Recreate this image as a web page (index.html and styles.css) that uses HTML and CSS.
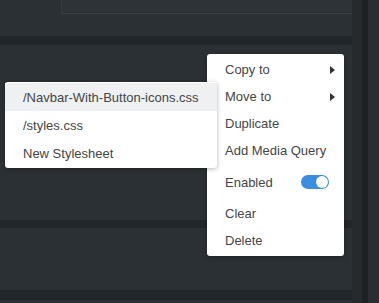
FILE: index.html
```html
<!DOCTYPE html>
<html>
<head>
<meta charset="utf-8">
<link rel="stylesheet" href="styles.css">
</head>
<body>
<div class="app">
  <div class="main">
    <div class="top"><div class="topbox"></div></div>
    <div class="band b1"></div>
    <div class="panel p1"></div>
    <div class="band b2"></div>
    <div class="panel p2"></div>
    <div class="band b3"></div>
    <div class="panel p3"></div>
  </div>
  <div class="strip s1"></div>
  <div class="strip s2"></div>
  <div class="strip s3"></div>
</div>

<div class="menu">
  <div class="item">Copy to<span class="arrow"></span></div>
  <div class="item">Move to<span class="arrow"></span></div>
  <div class="item">Duplicate</div>
  <div class="item">Add Media Query</div>
  <div class="item toggle-row">Enabled<span class="toggle"><span class="knob"></span></span></div>
  <div class="item">Clear</div>
  <div class="item">Delete</div>
</div>

<div class="submenu">
  <div class="sitem active">/Navbar-With-Button-icons.css</div>
  <div class="sitem">/styles.css</div>
  <div class="sitem">New Stylesheet</div>
</div>
</body>
</html>
```

FILE: styles.css
```css
html, body {
  margin: 0;
  padding: 0;
  width: 379px;
  height: 303px;
  overflow: hidden;
  background: #2b3034;
  font-family: "Liberation Sans", Arial, sans-serif;
}

.app {
  display: grid;
  grid-template-columns: 352px 10px 6px 1fr;
  height: 303px;
}

.main {
  display: flex;
  flex-direction: column;
  background: #2b3034;
}

.top {
  height: 36px;
  flex: none;
}

.topbox {
  margin-left: 61px;
  height: 13px;
  background: #2e3337;
  border-bottom: 1px solid #3a4045;
  border-left: 1px solid #353b40;
}

.band {
  flex: none;
  background: #232629;
}
.b1 { height: 9px; }
.b2 { height: 8px; }
.b3 { height: 10px; }

.panel {
  flex: none;
  background: #2b3034;
}
.p1 { height: 175px; }
.p2 { height: 62px; }
.p3 { flex: 1; }

.s1 { background: #262a2d; }
.s2 { background: #1e2124; }
.s3 { background: #2a2e32; }

.menu {
  position: absolute;
  left: 207px;
  top: 54px;
  width: 137px;
  padding: 2px 0;
  background: #fff;
  border-radius: 3px;
  box-shadow: 0 1px 4px rgba(0, 0, 0, 0.3);
  z-index: 1;
}

.item {
  height: 27px;
  display: flex;
  align-items: center;
  padding-left: 18px;
  padding-right: 10px;
  font-size: 13px;
  color: #454545;
  position: relative;
}

.toggle-row {
  height: 36px;
}

.arrow {
  position: absolute;
  left: 123px;
  top: 10px;
  width: 0;
  height: 0;
  border-top: 4px solid transparent;
  border-bottom: 4px solid transparent;
  border-left: 5px solid #333;
}

.toggle {
  position: absolute;
  left: 94px;
  top: 11px;
  width: 28px;
  height: 14px;
  border-radius: 7px;
  background: #3a8ee2;
}

.knob {
  position: absolute;
  right: 1px;
  top: 1px;
  width: 12px;
  height: 12px;
  border-radius: 50%;
  background: #fff;
}

.submenu {
  position: absolute;
  left: 5px;
  top: 82px;
  width: 212px;
  padding: 1px 0;
  background: #fff;
  border-radius: 3px;
  box-shadow: 0 1px 4px rgba(0, 0, 0, 0.3);
  z-index: 2;
}

.sitem {
  height: 28px;
  display: flex;
  align-items: center;
  padding-left: 18px;
  font-size: 13px;
  color: #454545;
}

.sitem.active {
  background: #eef0f2;
}
```
